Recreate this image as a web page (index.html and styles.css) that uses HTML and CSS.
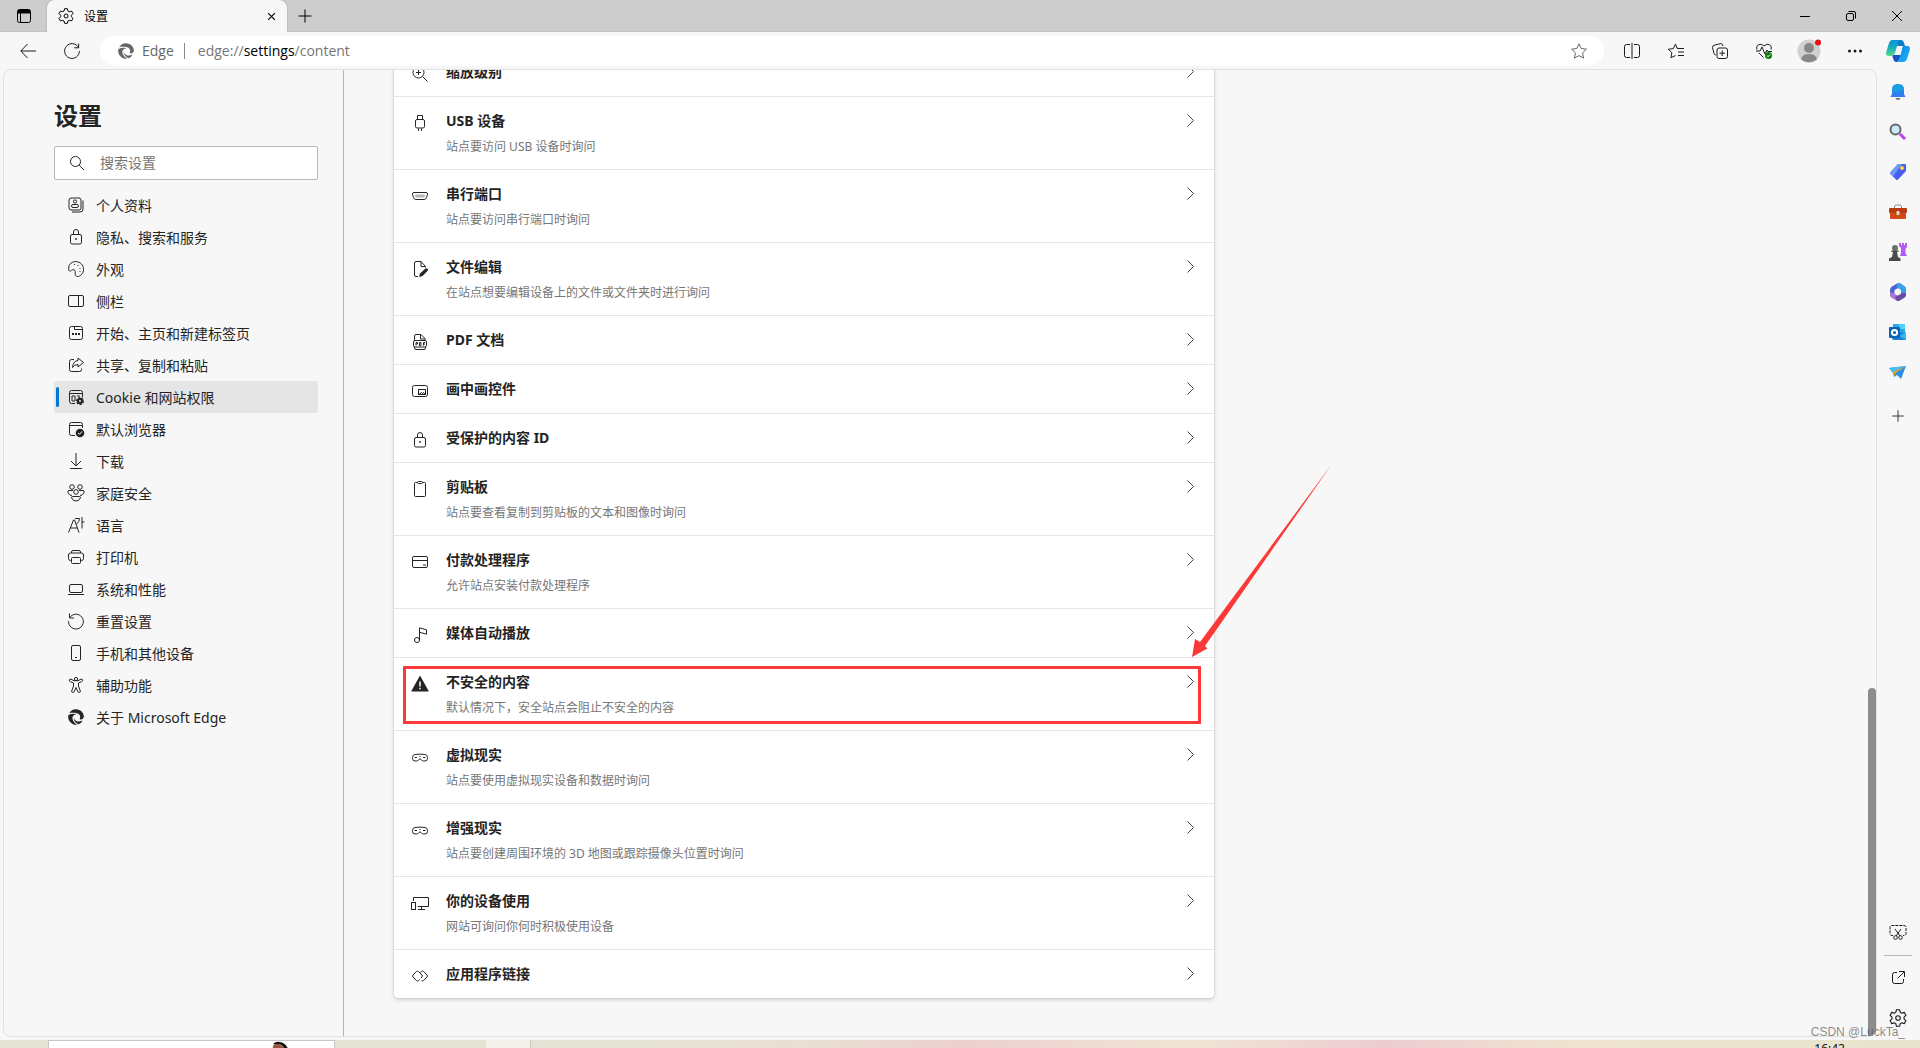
FILE: index.html
```html
<!DOCTYPE html>
<html lang="zh-CN">

<head>
  <meta charset="UTF-8">
  <meta name="viewport" content="width=device-width, initial-scale=1.0">
  <title>设置</title>
  <link rel="stylesheet" href="styles.css">
</head>

<body>
  <!-- shared icons -->
  <svg class="sprite" aria-hidden="true">
    <symbol id="gear" viewBox="0 0 16 16">
      <path d="M6.6.7h2.8L10 3l1.3.7 2.3-.6L15 5.6l-1.65 1.65v1.5L15 10.4l-1.4 2.5-2.3-.6L10 13l-.6 2.3H6.6L6 13l-1.3-.7-2.3.6L1 10.4l1.65-1.65v-1.5L1 5.6l1.4-2.5 2.3.6L6 3z" />
      <circle cx="8" cy="8" r="2" />
    </symbol>
    <symbol id="edge" viewBox="0 0 16 16">
      <path fill="currentColor" stroke="none" d="M1.2 4.2A8 8 0 0 1 15.9 7.2c0 2-1.3 3.2-3.1 3.2-1 0-1.3-.5-1-1 1-1.700.2-4.600-2.800-5.200C6.200 3.600 3.200 3.600 1.200 4.200z" />
      <path fill="currentColor" stroke="none" d="M.4 6C3 4.700 6 4.400 8.200 5.200 5.500 5.500 4 7.600 4.500 10c.5 2.600 2.500 4.800 5 5.700A8 8 0 0 1 .4 6z" />
      <path fill="currentColor" stroke="none" d="M6 8.300c-.3 2.700 2.700 4.600 5.300 4.200 1.300-.2 2.300-.7 3.200-1.100-.8 2-2.400 3.500-4 3.800C7.300 14 5 11 6 8.300z" />
    </symbol>
    <symbol id="lock" viewBox="0 0 16 16">
      <rect x="2.500" y="5.500" width="11" height="9.500" rx="1.500" />
      <path d="M5.500 5.500V3a2.500 2.500 0 0 1 5 0v2.500" />
      <circle cx="8" cy="10" r=".5" fill="currentColor" />
    </symbol>
    <symbol id="headset" viewBox="0 0 16 16">
      <path d="M3 5.500Q8 4.700 13 5.500q2.500.3 2.500 3v1q0 2.500-2.500 2.500h-1.500Q10 12 9.300 10.700q-1.300-1.700-2.600 0Q6 12 4.500 12H3Q.5 12 .5 9.500v-1q0-2.700 2.500-3zM2.500 8.500H5M11 8.500h2.500M7.500 7.500h1" />
    </symbol>
    <symbol id="chevron" viewBox="0 0 16 16">
      <path d="M5.500 1.500l6 6-6 6" />
    </symbol>
    <symbol id="plus" viewBox="0 0 16 16">
      <path d="M8 1.500v13M1.500 8h13" />
    </symbol>
    <symbol id="search" viewBox="0 0 16 16">
      <circle cx="6.500" cy="6.500" r="5" />
      <path d="M10.200 10.200l4.800 4.800" />
    </symbol>
  </svg>

  <header class="tab-bar">
    <button class="tab-menu" aria-label="标签页操作">
      <svg class="icon" viewBox="0 0 16 16"><rect x="1.500" y="1.500" width="13" height="13" rx="2" /><path d="M2 3h12M2 4.500h12" stroke-width="2" /><path d="M4.500 5v9" /></svg>
    </button>
    <div class="tab">
      <svg class="icon"><use href="#gear" /></svg>
      <span class="tab-title">设置</span>
      <button class="tab-close" aria-label="关闭标签页"><svg viewBox="0 0 16 16"><path d="M2 2l12 12M14 2L2 14" stroke-width="2" /></svg></button>
    </div>
    <button class="new-tab" aria-label="新建标签页"><svg class="icon"><use href="#plus" /></svg></button>
    <div class="window-controls">
      <button aria-label="最小化"><svg viewBox="0 0 10 10"><path d="M0 5.500h10" /></svg></button>
      <button aria-label="还原"><svg viewBox="0 0 10 10"><rect x=".5" y="2.500" width="7" height="7" rx="1.500" /><path d="M2.500.5H8Q9.500.5 9.500 2v5.500" /></svg></button>
      <button aria-label="关闭"><svg viewBox="0 0 10 10"><path d="M0 0l10 10M10 0L0 10" /></svg></button>
    </div>
  </header>

  <div class="toolbar">
    <button class="nav-btn" aria-label="后退"><svg class="icon" viewBox="0 0 16 16"><path d="M16 8H.8M7.500 1L.8 8l6.700 7" /></svg></button>
    <button class="nav-btn" aria-label="刷新"><svg class="icon" viewBox="0 0 16 16"><path d="M14.500 4.500A7.400 7.400 0 1 0 15.400 8M14.700.5v4.300h-4.500" /></svg></button>
    <div class="address-bar">
      <svg class="icon"><use href="#edge" /></svg>
      <span class="site-name">Edge</span>
      <div class="url" role="textbox" contenteditable="true" spellcheck="false" aria-label="地址栏">edge://<b>settings</b>/content</div>
      <button class="favorite" aria-label="收藏"><svg class="icon" viewBox="0 0 16 16"><path d="M8 .8l2.200 4.700 5.200.7-3.800 3.600.9 5.300L8 12.600l-4.500 2.500.9-5.300L.6 6.200l5.200-.7z" /></svg></button>
    </div>
    <div class="tools">
      <button aria-label="拆分屏幕"><svg class="icon" viewBox="0 0 16 16"><path d="M6 1.500H2.500Q.5 1.500.5 3.500v9q0 2 2 2H6M10 1.500h3.500q2 0 2 2v9q0 2-2 2H10M8 0v16" /></svg></button>
      <button aria-label="收藏夹"><svg class="icon" viewBox="0 0 16 16"><path d="M9.500 5.500H11L9 5.200 7.500 1 5.200 5.700l-4.900.5 3.600 3.500-1 5L7.500 12.500M10 5.500h6M10 9h6M10 12.500h6" /></svg></button>
      <button aria-label="集锦"><svg class="icon" viewBox="0 0 16 16"><rect x="5" y="5" width="10.500" height="10.500" rx="2" /><path d="M10.200 7.500v5.500M7.500 10.200h5.500M3.800 12Q2.500 12 2 10.500L.5 4.500Q.3 2.800 2 2.300L8.500.6q1.600-.3 2.200 1.400l.3 1" /></svg></button>
      <button aria-label="浏览器概要"><svg class="icon" viewBox="0 0 16 16"><path d="M.8 6.500Q0 3 2.500 1.700 5.500.3 8 3q2.500-2.700 5.500-1.300Q16 3 15.200 6.500M0 8h4l2-4 3 7 2-4 .8 1.500H16M3 10l4.500 4.500" /><circle cx="12.500" cy="12.500" r="3.500" fill="#107c10" stroke="none" /><path d="M11 12.700l1.200 1 2-2.200" stroke="#fff" /></svg></button>
      <button class="wide" aria-label="个人资料">
        <svg class="avatar" viewBox="0 0 24 24"><circle cx="12" cy="12" r="11.500" fill="#d2d0ce" /><circle cx="12" cy="9" r="5" fill="#8a8886" /><path d="M4 20q1.500-5 8-5t8 5a11.500 11.500 0 0 1-16 0z" fill="#8a8886" /><circle cx="21" cy="3.500" r="3" fill="#e81010" /></svg>
      </button>
      <button class="wide" aria-label="设置及其他"><svg class="icon" viewBox="0 0 16 16"><g fill="#1b1b1b" stroke="none"><circle cx="2.500" cy="8" r="1.500" /><circle cx="8" cy="8" r="1.500" /><circle cx="13.500" cy="8" r="1.500" /></g></svg></button>
      <button class="copilot" aria-label="Copilot">
        <svg viewBox="0 0 24 24">
          <defs>
            <linearGradient id="cp1" x1="0" y1="0" x2="0" y2="1"><stop offset="0" stop-color="#0a94dc" /><stop offset=".5" stop-color="#18b0b8" /><stop offset="1" stop-color="#5ad890" /></linearGradient>
            <linearGradient id="cp2" x1="0" y1="0" x2="1" y2="1"><stop offset="0" stop-color="#1484e0" /><stop offset="1" stop-color="#18b4fa" /></linearGradient>
          </defs>
          <path fill="#1552c8" d="M6 16h9l-2 5q-.6 2-2.500 2Q8 23 7.300 20z" />
          <path fill="#0c7cc8" d="M11 1h4q2 0 2.700 2L19 7h-8z" />
          <path fill="url(#cp1)" d="M6 1h8q-1.500.5-2 2.500L9 14q-1 3-4 3H2.500Q-.5 17 .2 13L3 4Q4 1 6 1z" />
          <path fill="url(#cp2)" d="M17 7h4.500q3 0 2.300 4L21 20q-1 3-4 3h-6q1.800-.5 2.400-2.500L16 10q.5-2 1-3z" />
        </svg>
      </button>
    </div>
  </div>

  <div class="workspace">
    <div class="page">
      <aside class="settings-menu">
        <h1>设置</h1>
        <label class="search-box">
          <svg class="icon"><use href="#search" /></svg>
          <input type="search" placeholder="搜索设置" aria-label="搜索设置">
        </label>
        <nav>
          <a href="#profiles"><svg class="icon" viewBox="0 0 16 16"><rect x="1" y="1" width="12" height="12" rx="2" /><circle cx="7" cy="4.500" r="1.600" /><rect x="3.500" y="7.500" width="7" height="3" rx="1.500" /><path d="M15 3.500V12q0 3-3 3H4" /></svg>个人资料</a>
          <a href="#privacy"><svg class="icon"><use href="#lock" /></svg>隐私、搜索和服务</a>
          <a href="#appearance"><svg class="icon" viewBox="0 0 16 16"><path d="M1 9.500C-.5 4.500 3 .6 7.500.6c4.800 0 8 3.400 8 7.600 0 4.300-3 7.300-6 7.300-2 0-2.500-1.500-2.300-3.200C7.500 10 7 8.500 5 8.700 3 8.900 2.500 11.500 1 9.500z" /><path d="M6 3.500h1M9.500 4.500h1M11.500 7.500h1M11.500 10.500h1" /></svg>外观</a>
          <a href="#sidebar"><svg class="icon" viewBox="0 0 16 16"><rect x=".5" y="2.500" width="15" height="11" rx="1.500" /><path d="M10.500 2.500v11" /></svg>侧栏</a>
          <a href="#start"><svg class="icon" viewBox="0 0 16 16"><rect x="1.500" y="1.500" width="13" height="13" rx="2" /><path d="M6.500 1.500v3h8" /><path d="M4 9h2M7 9h2M10 9h2" stroke-width="2" /></svg>开始、主页和新建标签页</a>
          <a href="#share"><svg class="icon" viewBox="0 0 16 16"><path d="M6 2.500H3.500q-2 0-2 2v8q0 2 2 2h8q2 0 2-2v-1M10 1l5.500 4.500L10 10V7.500Q6 7.500 4.500 10.500 5 4 10 3.500z" /></svg>共享、复制和粘贴</a>
          <a href="#content" class="active"><svg class="icon" viewBox="0 0 16 16"><path d="M7 14.500H3.500q-2 0-2-2v-9q0-2 2-2h9q2 0 2 2V8M1.500 4.500h13" /><path d="M4 7h3v5H4zM9 7h3" /><circle cx="12" cy="12" r="3" fill="currentColor" stroke-dasharray="2 1" stroke-width="2" /><circle cx="12" cy="12" r="1" fill="#e5e5e5" stroke="none" /></svg>Cookie 和网站权限</a>
          <a href="#default"><svg class="icon" viewBox="0 0 16 16"><path d="M7 14.500H3.500q-2 0-2-2v-9q0-2 2-2h9q2 0 2 2V7M1.500 4.500h13" /><circle cx="12" cy="12" r="4.300" fill="currentColor" stroke="none" /><path d="M10 12l1.500 1.300 2.500-2.800" stroke="#fff" /></svg>默认浏览器</a>
          <a href="#downloads"><svg class="icon" viewBox="0 0 16 16"><path d="M8 0v12.500M3 8l5 5 5-5M2 15.500h12" /></svg>下载</a>
          <a href="#family"><svg class="icon" viewBox="0 0 16 16"><circle cx="4" cy="2" r="2.300" /><circle cx="12" cy="2" r="2.300" /><circle cx="8" cy="7" r="2.300" /><path d="M5 5.500H1q-1.500 0-1 2Q1 10.500 4 10.500M11 5.500h4q1.500 0 1 2Q15 10.500 12 10.500M4.500 11.500h7q1.300 0 .8 1.500-1 3-4.300 3t-4.300-3q-.5-1.500.8-1.500z" /></svg>家庭安全</a>
          <a href="#languages"><svg class="icon" viewBox="0 0 16 16"><path d="M.5 15.500L5.500 3h1L11 15.500M2.500 11h7M7 1.500h4.500Q11.500 5 8.500 7M14 0v11.500M14 5h2.500" /></svg>语言</a>
          <a href="#printing"><svg class="icon" viewBox="0 0 16 16"><path d="M3.500 11.500h-1q-2 0-2-2V6q0-2 2-2h11q2 0 2 2v3.500q0 2-2 2h-1M3.500 4V3q0-1.500 1.500-1.500h6q1.500 0 1.500 1.500v1" /><rect x="3.500" y="8.500" width="9" height="6" rx="1" /></svg>打印机</a>
          <a href="#system"><svg class="icon" viewBox="0 0 16 16"><rect x="1.500" y="3.500" width="13" height="8" rx="1.500" /><path d="M0 13.500h16" /></svg>系统和性能</a>
          <a href="#reset"><svg class="icon" viewBox="0 0 16 16"><path d="M1.500.5v4.500H6M1.700 4.700A7.400 7.400 0 1 1 .6 8" /></svg>重置设置</a>
          <a href="#phone"><svg class="icon" viewBox="0 0 16 16"><rect x="3.500" y=".5" width="9" height="15" rx="1.500" /><path d="M7 12.500h2" /></svg>手机和其他设备</a>
          <a href="#accessibility"><svg class="icon" viewBox="0 0 16 16"><circle cx="8" cy="2" r="1.600" /><path d="M6 3.700L3 2.200Q1.500 1.800 1.300 3t1 1.600L5.500 6v3L3.700 14q0 1.500 1 1.500T6 15l2-4.500 2 4.500q.5.700 1.500.5t.8-1.500L10.500 9V6l3.200-1.400q1.200-.6 1-1.600T13 2.200l-3 1.500z" /></svg>辅助功能</a>
          <a href="#help"><svg class="icon"><use href="#edge" /></svg>关于 Microsoft Edge</a>
        </nav>
      </aside>

      <main class="content">
        <ul class="permissions">
          <li>
            <svg class="icon" viewBox="0 0 16 16"><circle cx="6.500" cy="6.500" r="5.500" /><path d="M10.500 10.500l5 5M6.500 4v5M4 6.500h5" /></svg>
            <div class="info"><h2>缩放级别</h2></div>
            <button class="go" aria-label="缩放级别"><svg><use href="#chevron" /></svg></button>
          </li>
          <li>
            <svg class="icon" viewBox="0 0 16 16"><path d="M5.500 4V.5h5V4M6.500 13.500V16M9.500 13.500V16" /><rect x="3.500" y="4.500" width="9" height="8.500" rx="1.500" /></svg>
            <div class="info"><h2>USB 设备</h2><p>站点要访问 USB 设备时询问</p></div>
            <button class="go" aria-label="USB 设备"><svg><use href="#chevron" /></svg></button>
          </li>
          <li>
            <svg class="icon" viewBox="0 0 16 16"><path d="M2 4.500h12q2 0 1.500 2l-1 3q-.5 2-2.500 2H4q-2 0-2.500-2l-1-3q-.5-2 1.500-2z" /><path d="M3.500 7h9l-.5 2H4z" fill="#b5b5b5" stroke="#b5b5b5" /></svg>
            <div class="info"><h2>串行端口</h2><p>站点要访问串行端口时询问</p></div>
            <button class="go" aria-label="串行端口"><svg><use href="#chevron" /></svg></button>
          </li>
          <li>
            <svg class="icon" viewBox="0 0 16 16"><path d="M6 15.500H4q-1.500 0-1.500-1.500V2Q2.500.5 4 .5h5l4.500 5v1M9 .5v5h4.500" /><path d="M7 16l1-3.500 5.500-5q1-.7 2 .3t.2 2L10.500 15z" fill="currentColor" stroke="none" /></svg>
            <div class="info"><h2>文件编辑</h2><p>在站点想要编辑设备上的文件或文件夹时进行询问</p></div>
            <button class="go" aria-label="文件编辑"><svg><use href="#chevron" /></svg></button>
          </li>
          <li>
            <svg class="icon" viewBox="0 0 16 16"><path d="M2.500 6V2Q2.500.5 4 .5h5l4 4V6M8.500.5v4.500h4.500M2.500 13v1q0 1.500 1.500 1.500h8q1.500 0 1.500-1.500v-1" /><rect x="1.500" y="6.500" width="13" height="6.500" rx="1.500" /><path d="M4 11.500v-3h1.500V10H4M7.500 8.500v3H9v-3zM11.500 11.500v-3h1.500M11.500 10H13" /></svg>
            <div class="info"><h2>PDF 文档</h2></div>
            <button class="go" aria-label="PDF 文档"><svg><use href="#chevron" /></svg></button>
          </li>
          <li>
            <svg class="icon" viewBox="0 0 16 16"><rect x=".5" y="2.500" width="15" height="11" rx="2" /><rect x="6.500" y="6.500" width="7" height="5" /><path d="M7 11.500l2.500-2 1 1 1-1 1.500 2" /></svg>
            <div class="info"><h2>画中画控件</h2></div>
            <button class="go" aria-label="画中画控件"><svg><use href="#chevron" /></svg></button>
          </li>
          <li>
            <svg class="icon"><use href="#lock" /></svg>
            <div class="info"><h2>受保护的内容 ID</h2></div>
            <button class="go" aria-label="受保护的内容 ID"><svg><use href="#chevron" /></svg></button>
          </li>
          <li>
            <svg class="icon" viewBox="0 0 16 16"><rect x="2.500" y="1.500" width="11" height="14" rx="1" /><rect x="5.500" y=".5" width="5" height="2" rx="1" fill="#fff" /></svg>
            <div class="info"><h2>剪贴板</h2><p>站点要查看复制到剪贴板的文本和图像时询问</p></div>
            <button class="go" aria-label="剪贴板"><svg><use href="#chevron" /></svg></button>
          </li>
          <li>
            <svg class="icon" viewBox="0 0 16 16"><rect x=".5" y="2.500" width="15" height="11" rx="1.500" /><path d="M.5 6.500h15M11 11h3" /></svg>
            <div class="info"><h2>付款处理程序</h2><p>允许站点安装付款处理程序</p></div>
            <button class="go" aria-label="付款处理程序"><svg><use href="#chevron" /></svg></button>
          </li>
          <li>
            <svg class="icon" viewBox="0 0 16 16"><circle cx="5" cy="13" r="2.500" /><path d="M7.500 13V.8l7 2v4.400l-7-2" /></svg>
            <div class="info"><h2>媒体自动播放</h2></div>
            <button class="go" aria-label="媒体自动播放"><svg><use href="#chevron" /></svg></button>
          </li>
          <li class="marked">
            <svg class="icon" viewBox="0 0 16 16"><path d="M8 1.500L15.200 14.500H.8z" fill="currentColor" stroke-width="2" /><path d="M8 5.500v5M8 11.800v1.500" stroke="#fff" stroke-width="1.500" /></svg>
            <div class="info"><h2>不安全的内容</h2><p>默认情况下，安全站点会阻止不安全的内容</p></div>
            <button class="go" aria-label="不安全的内容"><svg><use href="#chevron" /></svg></button>
            <span class="mark-box"></span>
            <svg class="mark-arrow" viewBox="0 0 140 193"><path d="M0 193l3-18 5 3L140 0 13 182l2.500 2.500z" /></svg>
          </li>
          <li>
            <svg class="icon"><use href="#headset" /></svg>
            <div class="info"><h2>虚拟现实</h2><p>站点要使用虚拟现实设备和数据时询问</p></div>
            <button class="go" aria-label="虚拟现实"><svg><use href="#chevron" /></svg></button>
          </li>
          <li>
            <svg class="icon"><use href="#headset" /></svg>
            <div class="info"><h2>增强现实</h2><p>站点要创建周围环境的 3D 地图或跟踪摄像头位置时询问</p></div>
            <button class="go" aria-label="增强现实"><svg><use href="#chevron" /></svg></button>
          </li>
          <li>
            <svg class="icon" viewBox="0 0 16 16"><path d="M1.500 6V2.500h15v9H5.500M9.500 11.500v2.500M6 14.500h7" /><rect x="-.5" y="7.500" width="4" height="7" /></svg>
            <div class="info"><h2>你的设备使用</h2><p>网站可询问你何时积极使用设备</p></div>
            <button class="go" aria-label="你的设备使用"><svg><use href="#chevron" /></svg></button>
          </li>
          <li>
            <svg class="icon" viewBox="0 0 16 16"><path d="M7.800 11.500L6.500 12.700q-1 .7-2 0L1 9q-.7-1 0-2l3.500-3.500q1-.7 2 0L10 7q.7 1 0 2l-1 1M8.200 4.500l1.300-1.200q1-.7 2 0L15 7q.7 1 0 2l-3.500 3.700q-1 .7-2 0" /></svg>
            <div class="info"><h2>应用程序链接</h2></div>
            <button class="go" aria-label="应用程序链接"><svg><use href="#chevron" /></svg></button>
          </li>
        </ul>
      </main>
      <div class="scrollbar"><div class="thumb"></div></div>
    </div>

    <aside class="edge-bar">
      <button aria-label="通知"><svg viewBox="0 0 18 18"><path fill="#2f7df0" d="M9 1q6 0 6 6v4l1.500 3h-15L3 11V7q0-6 6-6z" /><path fill="#1b9de2" d="M9 1q6 0 6 6-6 3-12 2V7q0-6 6-6z" /><path fill="#777" d="M6.500 15h5q-.5 2-2.500 2t-2.500-2z" /></svg></button>
      <button aria-label="搜索"><svg viewBox="0 0 18 18"><path d="M11 11l5 5" stroke="#c03af0" stroke-width="3" /><circle cx="6.500" cy="6.500" r="5" fill="#cde9fa" stroke="#666" stroke-width="2" /></svg></button>
      <button aria-label="购物"><svg viewBox="0 0 18 18"><path fill="#4c5cf5" d="M9 1h7q1 0 1 1v6L9 16.500q-1 1-2 0L1.500 11q-1-1 0-2z" /><path fill="#6d9cf8" d="M9 1h4L4 13.500 1.500 11q-1-1 0-2z" /><circle cx="13" cy="5" r="2" fill="#ffd84a" stroke="none" /></svg></button>
      <button aria-label="工具"><svg viewBox="0 0 18 18"><path d="M5.500 6V4q0-2 2-2h3q2 0 2 2v2" stroke="#888" /><rect x="1" y="8" width="16" height="8" rx="1" fill="#d04a16" /><rect x="0" y="5" width="18" height="5" rx="1" fill="#b93a10" /><rect x="7.500" y="8" width="3" height="4" rx="1" fill="#ddd" /></svg></button>
      <button aria-label="游戏"><svg viewBox="0 0 18 18"><path fill="#b45cf2" d="M10 0h2v2h1V0h2v2h1V0h2v4l-1.500 2v4l1.500 3h-7l1-3V5l-2-2z" /><circle cx="6" cy="5" r="3" fill="#6d6d6d" stroke="none" /><path fill="#4a4a4a" d="M2.500 7.500h7V9H8l1 5 2.500 1.500V18H0v-2.500L3 14l1-5H2.500z" /></svg></button>
      <button aria-label="Microsoft 365"><svg viewBox="0 0 18 18"><path fill="#4a62d8" d="M9 0L3 3.500Q1 4.500 1 7v6l4.500-2.500V7L10 4.500z" /><path fill="#3aa0e8" d="M8 0h3l4.500 3Q17 4 17 6v7l-5-3V7L8 4.500z" /><path fill="#a877d4" d="M1 9v3q0 2 2 3l5 3 3-4-5.500-3.500z" /><path fill="#6a4aa8" d="M17 10v2q0 2-2 3l-5 3H8l-2-4 6.500-4z" /><path fill="#f7f7f7" d="M9 5.800l3 1.700v3.200l-3 1.700-3-1.700V7.500z" /></svg></button>
      <button aria-label="Outlook"><svg viewBox="0 0 18 18"><path fill="#2aa7ea" d="M4 1h12v9H4z" /><path fill="#50d0fa" d="M10 1h6v5h-6z" /><path fill="#1480d2" d="M3 9l14 1v7H5q-2 0-2-2z" /><path fill="#35b5f0" d="M17 9v8L10 13z" /><rect x="0" y="4" width="11" height="11" rx="1" fill="#0c64b8" /><circle cx="5.500" cy="9.500" r="2.600" stroke="#fff" stroke-width="2" /></svg></button>
      <button aria-label="发送"><svg viewBox="0 0 18 18"><path fill="#2c8fe6" d="M0 5l17-2-5 13-4-4-3 2-1-4z" /><path fill="#45bdf5" d="M0 5l17-2L4 9z" /><path fill="#f0a21c" d="M17 3L4 9l1 5 1.500-4z" /></svg></button>
      <button class="customize" aria-label="自定义"><svg><use href="#plus" /></svg></button>
      <div class="edge-bar-bottom">
        <button aria-label="截图"><svg viewBox="0 0 18 18"><path d="M4 11.500H3q-2 0-2-2v-6q0-2 2-2h12q2 0 2 2v6q0 2-2 2h-1" stroke-dasharray="3 1" /><path d="M6 5l5 7M12 5l-5 7" /><circle cx="6.500" cy="13.500" r="1.800" /><circle cx="11.500" cy="13.500" r="1.800" /></svg></button>
        <hr>
        <button aria-label="打开链接"><svg viewBox="0 0 18 18"><path d="M8 3.500H5.500q-2 0-2 2v7q0 2 2 2h7q2 0 2-2V10M10 2.500h5.500V8M15 3L8.500 9.500" /></svg></button>
        <button aria-label="侧栏设置"><svg><use href="#gear" /></svg></button>
      </div>
    </aside>
  </div>

  <footer class="taskbar">
    <div class="taskbar-search"><svg viewBox="0 0 18 8"><path d="M1 8Q0 3 5 2l10 6z" fill="#9a5640" /><path d="M1 3Q4 0 8 1q6 1 8 7h-3Q10 3 5 3z" fill="#111" /></svg></div>
    <div class="taskbar-active"></div>
    <span class="clock">16:42</span>
  </footer>

  <div class="watermark">CSDN @LuckTa_</div>
</body>

</html>
```
FILE: styles.css
```css
* {
  box-sizing: border-box;
}

body {
  margin: 0;
  height: 100vh;
  display: flex;
  flex-direction: column;
  overflow: hidden;
  background: #f7f7f7;
  color: #242424;
  font-family: "Noto Sans", "Noto Sans CJK SC", sans-serif;
  font-size: 14px;
}

button {
  display: flex;
  align-items: center;
  justify-content: center;
  padding: 0;
  border: 0;
  background: none;
  color: inherit;
  font: inherit;
  cursor: pointer;
}

svg {
  fill: none;
  stroke: currentColor;
  stroke-width: 1;
  overflow: visible;
}

.sprite {
  display: none;
}

.icon {
  width: 16px;
  height: 16px;
  flex-shrink: 0;
}

/* tabs */
.tab-bar {
  display: flex;
  flex-shrink: 0;
  height: 32px;
  background: #cdcdcd;
  color: #000;
  border-bottom: 1px solid #c4c4c4;
}

.tab-menu {
  width: 47px;
}

.tab {
  display: flex;
  align-items: center;
  width: 240px;
  height: 32px;
  padding: 0 10px 0 11px;
  gap: 10px;
  background: #f7f7f7;
  border-radius: 8px 8px 0 0;
  box-shadow: 0 0 2px #999;
  clip-path: inset(0 -3px 0 -3px);
}

.tab-title {
  flex: 1;
  font-size: 12px;
}

.tab-close {
  width: 12px;
  height: 12px;
}

.tab-close svg {
  width: 9px;
  height: 9px;
}

.new-tab {
  width: 36px;
}

.window-controls {
  display: flex;
  margin-left: auto;
}

.window-controls button {
  width: 46px;
}

.window-controls svg {
  width: 10px;
  height: 10px;
}

/* address row */
.toolbar {
  display: flex;
  flex-shrink: 0;
  height: 37px;
  padding: 4px 0 3px 6px;
  color: #1b1b1b;
}

.nav-btn {
  width: 44px;
}

.address-bar {
  display: flex;
  flex: 1;
  align-items: center;
  height: 30px;
  margin: 0 6px;
  padding: 0 17px 0 18px;
  border-radius: 15px;
  background: #fff;
  color: #666;
  font-family: "Open Sans", sans-serif;
}

.site-name {
  margin: 0 10px 0 8px;
  line-height: 16px;
}

.url {
  flex: 1;
  padding-left: 13px;
  border-left: 1px solid #888;
  line-height: 16px;
  color: #767676;
}

.url b {
  font-weight: 400;
  color: #000;
}

.tools {
  display: flex;
}

.tools button {
  width: 44px;
}

.tools .wide {
  width: 46px;
}

.tools .copilot {
  width: 42px;
  padding-right: 2px;
}

.avatar {
  width: 24px;
  height: 24px;
  stroke: none;
}

.copilot svg {
  width: 24px;
  height: 24px;
  stroke: none;
}

/* page */
.workspace {
  display: flex;
  flex: 1;
  min-height: 0;
}

.page {
  display: flex;
  flex: 1;
  margin: 0 0 3px 3px;
  border: 1px solid #e0e0e0;
  border-radius: 8px;
  overflow: hidden;
}

.settings-menu {
  width: 340px;
  padding: 30px 25px 0 50px;
  border-right: 1px solid #b5b5b5;
}

.settings-menu h1 {
  margin: 0 0 14px;
  font-size: 24px;
  line-height: 32px;
}

.search-box {
  display: flex;
  align-items: center;
  height: 34px;
  margin-bottom: 9px;
  padding: 0 14px;
  gap: 15px;
  border: 1px solid #b8b8b8;
  border-radius: 2px;
  background: #fff;
}

.search-box input {
  flex: 1;
  min-width: 0;
  height: 20px;
  margin-bottom: 2px;
  padding: 0;
  border: 0;
  outline: 0;
  background: none;
  font: inherit;
}

.search-box input::placeholder {
  color: #767676;
}

.settings-menu nav a {
  position: relative;
  display: flex;
  align-items: center;
  height: 32px;
  padding-left: 14px;
  gap: 12px;
  border-radius: 2px;
  color: inherit;
  text-decoration: none;
}

.settings-menu nav a.active {
  background: #e5e5e5;
}

.settings-menu nav a.active::before {
  content: "";
  position: absolute;
  left: 2px;
  top: 6px;
  bottom: 6px;
  width: 3px;
  border-radius: 2px;
  background: #0078d4;
}

/* scrolled to the end, so the list hangs from the bottom */
.content {
  display: flex;
  flex: 1;
  flex-direction: column;
  justify-content: flex-end;
  padding: 0 50px 38px;
}

.permissions {
  max-width: 820px;
  margin: 0;
  padding: 0;
  list-style: none;
  background: #fff;
  border-radius: 4px;
  box-shadow: 0 0 2px rgba(0, 0, 0, .2), 0 2px 4px rgba(0, 0, 0, .14);
}

.permissions li {
  position: relative;
  display: flex;
  align-items: flex-start;
  padding: 14px 16px 14px 18px;
  gap: 18px;
  border-bottom: 1px solid #e6e6e6;
}

.permissions li:last-child {
  border-bottom: 0;
}

.permissions .icon {
  margin-top: 4px;
}

.info {
  flex: 1;
}

.info h2 {
  margin: 0;
  font-size: 14px;
  font-weight: 700;
  line-height: 20px;
}

.info p {
  margin: 8px 0 0;
  font-size: 12px;
  line-height: 16px;
  color: #767676;
}

.go {
  width: 16px;
  height: 20px;
  color: #444;
}

.go svg {
  width: 16px;
  height: 16px;
}

/* red annotation */
.marked {
  z-index: 1;
}

.mark-box {
  position: absolute;
  top: 8px;
  right: 13px;
  bottom: 6px;
  left: 9px;
  border: 3px solid #fc3939;
}

.mark-arrow {
  position: absolute;
  top: -194px;
  right: -118px;
  width: 140px;
  height: 193px;
  fill: #fc3939;
  stroke: none;
}

.scrollbar {
  display: flex;
  align-items: flex-end;
  width: 8px;
}

.thumb {
  width: 8px;
  height: 36%;
  border-radius: 4px 4px 0 0;
  background: #8c8c8c;
}

/* right bar */
.edge-bar {
  display: flex;
  flex-direction: column;
  width: 43px;
  padding: 3px 1px 2px 0;
  color: #1b1b1b;
}

.edge-bar button {
  width: 100%;
  height: 40px;
  flex-shrink: 0;
}

.edge-bar svg {
  width: 18px;
  height: 18px;
}

.edge-bar path[fill],
.edge-bar rect[fill] {
  stroke: none;
}

.edge-bar .customize {
  margin-top: 4px;
}

.customize svg {
  width: 14px;
  height: 14px;
}

.edge-bar-bottom {
  margin-top: auto;
}

.edge-bar hr {
  width: 28px;
  height: 1px;
  margin: 2px auto;
  border: 0;
  background: #b8b8b8;
}

/* top edge of the taskbar */
.taskbar {
  display: flex;
  flex-shrink: 0;
  height: 8px;
  padding: 0 75px 0 48px;
  overflow: hidden;
  background: linear-gradient(90deg, #e3e3d5 30%, #e9dfd2 42%, #ecd0d0 50%, #f0e4d4 62%, #eccdd2 72%, #efe4d0 82%, #e6e4cc);
}

.taskbar-search {
  width: 287px;
  padding-left: 223px;
  border: 1px solid #c6c6c6;
  border-bottom: 0;
  background: #fff;
}

.taskbar-search svg {
  display: block;
  width: 18px;
  height: 8px;
  stroke: none;
}

.taskbar-active {
  width: 45px;
  margin-left: 151px;
  background: #f2f1ea;
  border-right: 1px solid #c9c9bb;
}

.clock {
  margin-left: auto;
  font-size: 12px;
  line-height: 18px;
  color: #111;
}

.watermark {
  position: absolute;
  right: 15px;
  bottom: 8px;
  font-family: "Liberation Sans", sans-serif;
  font-size: 12px;
  line-height: 16px;
  color: rgba(90, 90, 90, .7);
}
```
